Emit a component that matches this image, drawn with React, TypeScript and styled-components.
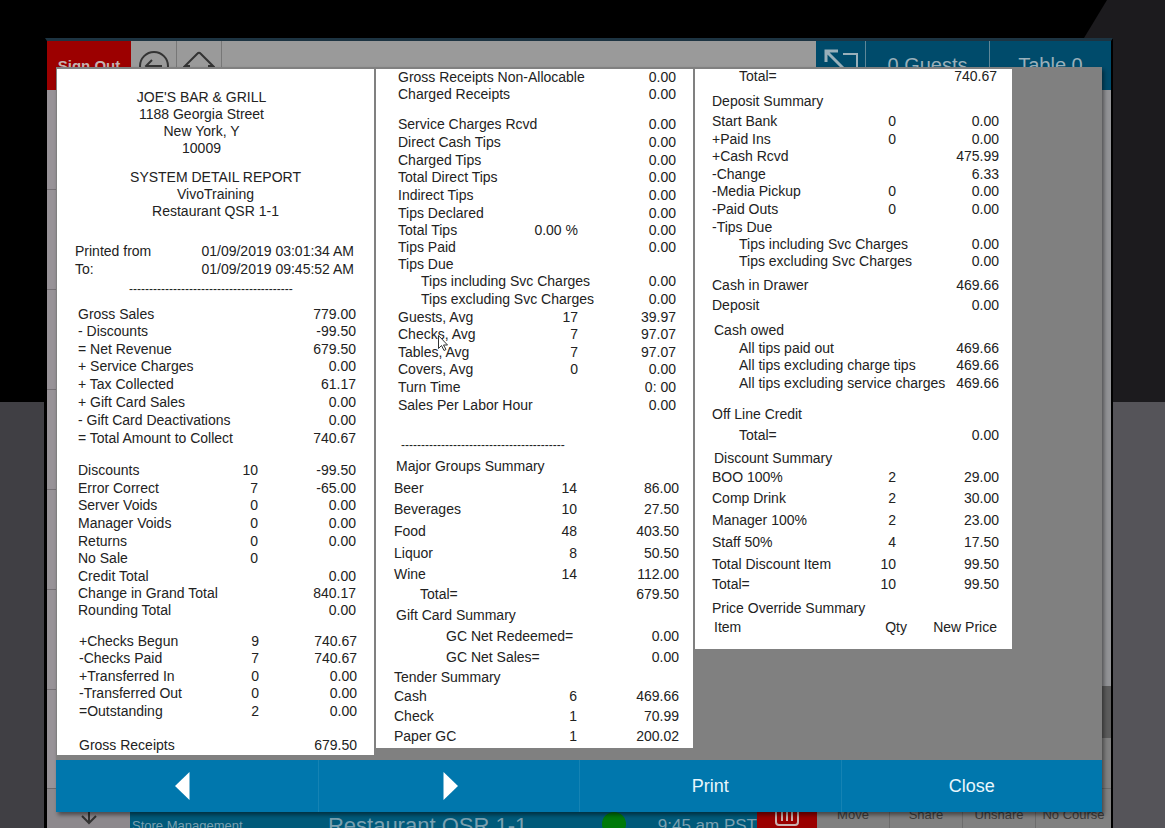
import React from "react";
import styled, { createGlobalStyle } from "styled-components";

const GlobalStyle = createGlobalStyle`
  *, *::before, *::after { box-sizing: border-box; }
  body { margin: 0; background: #000; font-family: "Liberation Sans", Arial, sans-serif; }
  button { font-family: inherit; border: 0; padding: 0; margin: 0; cursor: pointer; }
`;

const Desktop = styled.div`
  position: relative;
  display: flex;
  height: 100vh;
  padding: 38px 52px 0 45px;
  overflow: hidden;
  background: #000;
`;

const Wallpaper = styled.div`
  position: absolute;
  inset: 0;
  display: grid;
  grid-template-columns: 44px 1fr 81px;
  grid-template-rows: 402px 1fr;
`;

const Swatch = styled.div<{ $color: string; $slant?: boolean }>`
  background: ${(p) => p.$color};
  clip-path: ${(p) => (p.$slant ? "polygon(23px 0, 100% 0, 100% 100%, 0 100%, 0 38px)" : "none")};
`;

const Screen = styled.main`
  position: relative;
  flex: 1;
  min-width: 0;
  display: flex;
  flex-direction: column;
  border: 2px solid #000;
  border-top: 3px solid #1d3442;
  border-bottom: 0;
  background: #989398;
`;

const TopBar = styled.header`
  display: flex;
  height: 49px;
  flex: none;
  background: #9a9a9a;
`;

const SignOut = styled.button`
  width: 84px;
  background: #9c0000;
  color: #c4b4b4;
  font-size: 15px;
  font-weight: 700;
`;

const IconButton = styled.button<{ $width: number }>`
  width: ${(p) => p.$width}px;
  display: grid;
  place-items: center;
  background: #9a9a9a;
  border-right: 1px solid #777;
`;

const BlueButton = styled.button<{ $width: number }>`
  width: ${(p) => p.$width}px;
  display: grid;
  place-items: center;
  background: #004b6b;
  color: #9ab0ba;
  font-size: 20px;
  & + & { border-left: 1px solid #5f8798; }
`;

const Spacer = styled.div`
  flex: 1;
`;

const Middle = styled.div`
  flex: 1;
  display: flex;
  justify-content: space-between;
`;

const SideList = styled.div`
  width: 84px;
  background: repeating-linear-gradient(#989398 0 99px, #777277 99px 100px);
`;

const OrderPanel = styled.div`
  width: 294px;
  display: flex;
  flex-direction: column;
  background: #929396;
`;

const PanelTotals = styled.div`
  height: 52px;
  margin-top: auto;
  background: #5c5c5c;
`;

const PanelFoot = styled.div`
  height: 50px;
  background: #808080;
`;

const StatusBar = styled.footer`
  flex: none;
  display: flex;
  height: 40px;
  overflow: hidden;
`;

const ScrollDown = styled.button`
  width: 83px;
  background: #8d898d;
  border-top: 1px solid #6d6a6d;
  display: flex;
  justify-content: center;
  align-items: flex-start;
  padding-top: 16px;
`;

const Status = styled.div`
  flex: 1;
  display: grid;
  grid-template-columns: 196fr 274fr 56fr 99fr;
  align-items: start;
  background: #005a7a;
  color: #7ba0b0;
  padding: 24px 0 0 2px;
  white-space: nowrap;
`;

const StatusText = styled.span<{ $size: number }>`
  font-size: ${(p) => p.$size}px;
  line-height: 28px;
`;

const Dot = styled.span`
  width: 24px;
  height: 24px;
  border-radius: 50%;
  background: #007a0a;
`;

const TrashButton = styled.button`
  width: 60px;
  flex: none;
  background: #9a0000;
  display: flex;
  justify-content: center;
  align-items: flex-end;
`;

const ActionButton = styled.button`
  width: 73px;
  flex: none;
  background: #808080;
  color: #3c3c3c;
  border-top: 1px solid #6c6c6c;
  border-right: 1px solid #6c6c6c;
  font-size: 13px;
  line-height: 18px;
  padding-top: 12px;
  white-space: nowrap;
  &:last-child { width: 75px; border-right: 0; }
`;

const Dialog = styled.section`
  position: absolute;
  top: 26px;
  left: 9px;
  right: 9px;
  display: flex;
  flex-direction: column;
  border: solid #808080;
  border-width: 2px 0 0 0;
  background: #808080;
  box-shadow: 2px 3px 4px rgba(0, 0, 0, 0.45);
`;

const Papers = styled.div`
  display: flex;
  align-items: flex-start;
  gap: 2px;
  height: 691px;
  padding-left: 1px;
`;

const Paper = styled.article<{ $bottom: number }>`
  flex: 0 1 317px;
  min-width: 0;
  background: #fff;
  color: #222;
  font-size: 14px;
  padding-bottom: ${(p) => p.$bottom}px;
`;

const Heading = styled.div<{ $gap: number; $shift?: number }>`
  margin-top: ${(p) => p.$gap}px;
  padding-left: ${(p) => p.$shift ?? 0}px;
  padding-right: 28px;
  text-align: center;
  line-height: 17px;
`;

const Rule = styled.div<{ $gap: number; $left: number }>`
  margin-top: ${(p) => p.$gap}px;
  padding-left: ${(p) => p.$left}px;
  font-size: 12px;
  line-height: 18px;
  white-space: nowrap;
`;

const Table = styled.table<{ $gap: number; $left: number; $right: number }>`
  table-layout: fixed;
  border-collapse: collapse;
  width: calc(100% - ${(p) => p.$left + p.$right}px);
  margin: ${(p) => p.$gap}px ${(p) => p.$right}px 0 ${(p) => p.$left}px;
`;

const Col = styled.col<{ $width?: number }>`
  width: ${(p) => (p.$width ? p.$width + "px" : "auto")};
`;

const Label = styled.th<{ $height: number; $indent: number }>`
  padding: 0 0 0 ${(p) => p.$indent}px;
  font-weight: 400;
  text-align: left;
  white-space: nowrap;
  height: ${(p) => p.$height}px;
  line-height: ${(p) => p.$height}px;
`;

const Figure = styled.td<{ $height: number }>`
  padding: 0;
  text-align: right;
  white-space: nowrap;
  line-height: ${(p) => p.$height}px;
`;

const DialogActions = styled.div`
  display: grid;
  grid-template-columns: repeat(4, 1fr);
`;

const DialogButton = styled.button`
  height: 52px;
  background: #0077ad;
  color: #e8f6fc;
  font-size: 18px;
  display: grid;
  place-items: center;
  & + & { border-left: 1px solid #1583b4; }
`;

const Pointer = styled.svg`
  position: absolute;
  top: 334px;
  left: 437px;
`;

type Line = [label: string, qty: string, value: string, height: number, indent?: number];

interface SectionProps {
  gap?: number;
  left: number;
  right: number;
  amount: number;
  rows: Line[];
}

const Section = ({ gap = 0, left, right, amount, rows }: SectionProps) => (
  <Table $gap={gap} $left={left} $right={right}>
    <colgroup>
      <Col />
      <Col $width={46} />
      <Col $width={amount} />
    </colgroup>
    <tbody>
      {rows.map(([label, qty, value, height, indent = 0]) => (
        <tr key={label}>
          <Label scope="row" $height={height} $indent={indent}>{label}</Label>
          <Figure $height={height}>{qty}</Figure>
          <Figure $height={height}>{value}</Figure>
        </tr>
      ))}
    </tbody>
  </Table>
);

const sales: Line[] = [
  ["Gross Sales", "", "779.00", 17],
  ["- Discounts", "", "-99.50", 17],
  ["= Net Revenue", "", "679.50", 18],
  ["+ Service Charges", "", "0.00", 17],
  ["+ Tax Collected", "", "61.17", 18],
  ["+ Gift Card Sales", "", "0.00", 18],
  ["- Gift Card Deactivations", "", "0.00", 18],
  ["= Total Amount to Collect", "", "740.67", 18],
];

const corrections: Line[] = [
  ["Discounts", "10", "-99.50", 18],
  ["Error Correct", "7", "-65.00", 18],
  ["Server Voids", "0", "0.00", 17],
  ["Manager Voids", "0", "0.00", 18],
  ["Returns", "0", "0.00", 18],
  ["No Sale", "0", "", 17],
  ["Credit Total", "", "0.00", 18],
  ["Change in Grand Total", "", "840.17", 17],
  ["Rounding Total", "", "0.00", 17],
];

const checks: Line[] = [
  ["+Checks Begun", "9", "740.67", 17],
  ["-Checks Paid", "7", "740.67", 17],
  ["+Transferred In", "0", "0.00", 18],
  ["-Transferred Out", "0", "0.00", 17],
  ["=Outstanding", "2", "0.00", 18],
];

const tips: Line[] = [
  ["Service Charges Rcvd", "", "0.00", 17],
  ["Direct Cash Tips", "", "0.00", 18],
  ["Charged Tips", "", "0.00", 18],
  ["Total Direct Tips", "", "0.00", 17],
  ["Indirect Tips", "", "0.00", 18],
  ["Tips Declared", "", "0.00", 18],
  ["Total Tips", "0.00 %", "0.00", 17],
  ["Tips Paid", "", "0.00", 17],
  ["Tips Due", "", "", 17],
  ["Tips including Svc Charges", "", "0.00", 17, 23],
  ["Tips excluding Svc Charges", "", "0.00", 18, 23],
  ["Guests, Avg", "17", "39.97", 18],
  ["Checks, Avg", "7", "97.07", 17],
  ["Tables, Avg", "7", "97.07", 18],
  ["Covers, Avg", "0", "0.00", 17],
  ["Turn Time", "", "0: 00", 18],
  ["Sales Per Labor Hour", "", "0.00", 18],
];

const groups: Line[] = [
  ["Major Groups Summary", "", "", 22, 2],
  ["Beer", "14", "86.00", 22],
  ["Beverages", "10", "27.50", 21],
  ["Food", "48", "403.50", 22],
  ["Liquor", "8", "50.50", 22],
  ["Wine", "14", "112.00", 20],
  ["Total=", "", "679.50", 20, 26],
  ["Gift Card Summary", "", "", 22, 2],
  ["GC Net Redeemed=", "", "0.00", 20, 52],
  ["GC Net Sales=", "", "0.00", 22, 52],
  ["Tender Summary", "", "", 18],
  ["Cash", "6", "469.66", 20],
  ["Check", "1", "70.99", 20],
  ["Paper GC", "1", "200.02", 20],
];

const deposits: Line[] = [
  ["Deposit Summary", "", "", 20],
  ["Start Bank", "0", "0.00", 20],
  ["+Paid Ins", "0", "0.00", 17],
  ["+Cash Rcvd", "", "475.99", 17],
  ["-Change", "", "6.33", 18],
  ["-Media Pickup", "0", "0.00", 17],
  ["-Paid Outs", "0", "0.00", 18],
  ["-Tips Due", "", "", 18],
  ["Tips including Svc Charges", "", "0.00", 17, 27],
  ["Tips excluding Svc Charges", "", "0.00", 17, 27],
];

const owed: Line[] = [
  ["Cash owed", "", "", 18, 2],
  ["All tips paid out", "", "469.66", 18, 27],
  ["All tips excluding charge tips", "", "469.66", 17, 27],
  ["All tips excluding service charges", "", "469.66", 18, 27],
];

const discounts: Line[] = [
  ["Discount Summary", "", "", 18, 2],
  ["BOO 100%", "2", "29.00", 20],
  ["Comp Drink", "2", "30.00", 22],
  ["Manager 100%", "2", "23.00", 22],
  ["Staff 50%", "4", "17.50", 22],
  ["Total Discount Item", "10", "99.50", 22],
  ["Total=", "10", "99.50", 18],
];

const dashes = "-".repeat(41);

export default function App() {
  return (
    <Desktop>
      <GlobalStyle />
      <Wallpaper>
        <Swatch $color="#000" />
        <Swatch $color="#000" />
        <Swatch $color="#1c1b1e" $slant />
        <Swatch $color="#403f44" />
        <Swatch $color="#000" />
        <Swatch $color="#555459" />
      </Wallpaper>
      <Screen>
        <TopBar>
          <SignOut>Sign Out</SignOut>
          <IconButton $width={46} aria-label="Back">
            <svg width="32" height="32" viewBox="0 0 32 32" fill="none" stroke="#333" strokeWidth="2">
              <circle cx="16" cy="16" r="14" />
              <path d="M24 16H9M14 10l-6 6 6 6" />
            </svg>
          </IconButton>
          <IconButton $width={45} aria-label="Home">
            <svg width="32" height="32" viewBox="0 0 32 32" fill="none" stroke="#333" strokeWidth="2">
              <path d="M2 16 14.500 3.500a2 2 0 0 1 3 0L30 16h-4v12H6V16z" />
            </svg>
          </IconButton>
          <Spacer />
          <BlueButton $width={49} aria-label="Expand">
            <svg width="36" height="36" viewBox="0 0 36 36" fill="none" stroke="#9ab0ba">
              <path d="M3 14V3h12M3 3l17 17" strokeWidth="3" />
              <path d="M20 6h14v26H9V22" strokeWidth="2" />
            </svg>
          </BlueButton>
          <BlueButton $width={124}>0 Guests</BlueButton>
          <BlueButton $width={122}>Table 0</BlueButton>
        </TopBar>
        <Middle>
          <SideList />
          <OrderPanel>
            <PanelTotals />
            <PanelFoot />
          </OrderPanel>
        </Middle>
        <StatusBar>
          <ScrollDown aria-label="Scroll down">
            <svg width="18" height="20" viewBox="0 0 18 20" fill="none" stroke="#333" strokeWidth="2">
              <path d="M9 0v18M2 11l7 7 7-7" />
            </svg>
          </ScrollDown>
          <Status>
            <StatusText $size={13}>Store Management</StatusText>
            <StatusText $size={22}>Restaurant QSR 1-1</StatusText>
            <Dot />
            <StatusText $size={17}>9:45 am PST</StatusText>
          </Status>
          <TrashButton aria-label="Delete">
            <svg width="26" height="30" viewBox="0 0 26 30" fill="none" stroke="#c9b0b0" strokeWidth="2">
              <path d="M2 8v16a3 3 0 0 0 3 3h16a3 3 0 0 0 3-3V8M8 12h10v11M8 12v11M13 12v11" />
            </svg>
          </TrashButton>
          <ActionButton>Move</ActionButton>
          <ActionButton>Share</ActionButton>
          <ActionButton>Unshare</ActionButton>
          <ActionButton>No Course</ActionButton>
        </StatusBar>

        <Dialog role="dialog" aria-label="System detail report">
          <Papers>
            <Paper $bottom={1}>
              <Heading $gap={20}>
                JOE'S BAR &amp; GRILL<br />1188 Georgia Street<br />New York, Y<br />10009
              </Heading>
              <Heading $gap={12} $shift={28}>
                SYSTEM DETAIL REPORT<br />VivoTraining<br />Restaurant QSR 1-1
              </Heading>
              <Section gap={22} left={18} right={20} amount={153} rows={[
                ["Printed from", "", "01/09/2019 03:01:34 AM", 18],
                ["To:", "", "01/09/2019 09:45:52 AM", 18],
              ]} />
              <Rule $gap={2} $left={72}>{dashes}</Rule>
              <Section gap={8} left={21} right={18} amount={98} rows={sales} />
              <Section gap={14} left={21} right={18} amount={98} rows={corrections} />
              <Section gap={14} left={22} right={17} amount={98} rows={checks} />
              <Section gap={17} left={22} right={17} amount={98} rows={[["Gross Receipts", "", "679.50", 17]]} />
            </Paper>
            <Paper $bottom={2}>
              <Section left={22} right={17} amount={98} rows={[
                ["Gross Receipts Non-Allocable", "", "0.00", 16],
                ["Charged Receipts", "", "0.00", 18],
              ]} />
              <Section gap={13} left={22} right={17} amount={98} rows={tips} />
              <Rule $gap={22} $left={25}>{dashes}</Rule>
              <Section gap={1} left={18} right={14} amount={102} rows={groups} />
            </Paper>
            <Paper $bottom={13}>
              <Section left={17} right={15} amount={103} rows={[["Total=", "", "740.67", 14, 27]]} />
              <Section gap={8} left={17} right={13} amount={103} rows={deposits} />
              <Section gap={5} left={17} right={13} amount={103} rows={[
                ["Cash in Drawer", "", "469.66", 20],
                ["Deposit", "", "0.00", 20],
              ]} />
              <Section gap={6} left={17} right={13} amount={103} rows={owed} />
              <Section gap={12} left={17} right={13} amount={103} rows={[
                ["Off Line Credit", "", "", 20],
                ["Total=", "", "0.00", 22, 27],
              ]} />
              <Section gap={3} left={17} right={13} amount={103} rows={discounts} />
              <Section gap={5} left={17} right={15} amount={90} rows={[
                ["Price Override Summary", "", "", 20],
                ["Item", "Qty", "New Price", 18, 2],
              ]} />
            </Paper>
          </Papers>
          <DialogActions>
            <DialogButton aria-label="Previous page">
              <svg width="24" height="28" viewBox="0 0 24 28" fill="#fff"><path d="M0 14 14.500 0v28z" /></svg>
            </DialogButton>
            <DialogButton aria-label="Next page">
              <svg width="18" height="28" viewBox="0 0 18 28" fill="#fff"><path d="M18 14 3.500 0v28z" /></svg>
            </DialogButton>
            <DialogButton>Print</DialogButton>
            <DialogButton>Close</DialogButton>
          </DialogActions>
        </Dialog>
      </Screen>
      <Pointer width="13" height="19" viewBox="0 0 13 19" fill="#fff" stroke="#333" strokeWidth="1">
        <path d="M1.500 1.500v13l3-3 2.500 5 2-1-2.500-4.500h4z" />
      </Pointer>
    </Desktop>
  );
}
